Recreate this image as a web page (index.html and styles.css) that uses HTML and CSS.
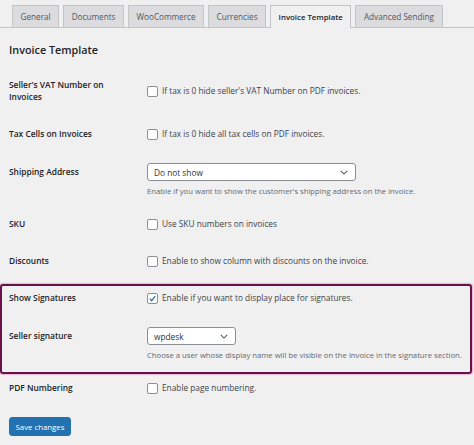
FILE: index.html
```html
<!DOCTYPE html>
<html lang="en">
<head>
<meta charset="utf-8">
<title>Invoice Template</title>
<link rel="stylesheet" href="styles.css">
</head>
<body>
<div class="page">
  <nav class="tabs">
    <a class="tab">General</a>
    <a class="tab">Documents</a>
    <a class="tab">WooCommerce</a>
    <a class="tab">Currencies</a>
    <a class="tab active">Invoice Template</a>
    <a class="tab">Advanced Sending</a>
  </nav>
  <div class="content">
    <h2 class="title">Invoice Template</h2>
    <div class="form">
      <div class="row center">
        <div class="label">Seller's VAT Number on<br>Invoices</div>
        <label class="check"><span class="box"></span>If tax is 0 hide seller's VAT Number on PDF invoices.</label>
      </div>
      <div class="row">
        <div class="label">Tax Cells on Invoices</div>
        <label class="check"><span class="box"></span>If tax is 0 hide all tax cells on PDF invoices.</label>
      </div>
      <div class="row select-row">
        <div class="label">Shipping Address</div>
        <div class="field">
          <div class="select wide">Do not show<svg class="chev" viewBox="0 0 10 6" width="8" height="5"><path d="M1 1l4 4 4-4" fill="none" stroke="#50575e" stroke-width="1.3"/></svg></div>
          <p class="desc">Enable if you want to show the customer's shipping address on the invoice.</p>
        </div>
      </div>
      <div class="row">
        <div class="label">SKU</div>
        <label class="check"><span class="box"></span>Use SKU numbers on invoices</label>
      </div>
      <div class="row">
        <div class="label">Discounts</div>
        <label class="check"><span class="box"></span>Enable to show column with discounts on the invoice.</label>
      </div>
      <div class="highlight">
        <div class="row">
          <div class="label">Show Signatures</div>
          <label class="check"><span class="box checked"><svg viewBox="0 0 10 10" width="9" height="9"><path d="M2 5.2l2 2.2 4-5" fill="none" stroke="#2271b1" stroke-width="1.4"/></svg></span>Enable if you want to display place for signatures.</label>
        </div>
        <div class="row select-row">
          <div class="label">Seller signature</div>
          <div class="field">
            <div class="select narrow">wpdesk<svg class="chev" viewBox="0 0 10 6" width="8" height="5"><path d="M1 1l4 4 4-4" fill="none" stroke="#50575e" stroke-width="1.3"/></svg></div>
            <p class="desc">Choose a user whose display name will be visible on the invoice in the signature section.</p>
          </div>
        </div>
      </div>
      <div class="row">
        <div class="label">PDF Numbering</div>
        <label class="check"><span class="box"></span>Enable page numbering.</label>
      </div>
    </div>
    <button class="save">Save changes</button>
  </div>
</div>
</body>
</html>
```
FILE: styles.css
```css
html, body {
  margin: 0;
  padding: 0;
  background: #f0f0f1;
}
body {
  font-family: "Open Sans", "Noto Sans", sans-serif;
  color: #1d2327;
  width: 474px;
  height: 445px;
  overflow: hidden;
}
.tabs {
  display: flex;
  gap: 4px;
  padding: 5px 0 0 12px;
  border-bottom: 1px solid #c3c4c7;
  height: 22px;
}
.tab {
  display: flex;
  align-items: center;
  height: 21px;
  padding: 0 7.5px;
  background: #dcdcde;
  border: 1px solid #c3c4c7;
  border-bottom: none;
  font-size: 8.2px;
  font-weight: 400;
  color: #50575e;
  white-space: nowrap;
}
.tab.active {
  background: #f0f0f1;
  color: #1d2327;
  height: 22px;
  font-weight: 600;
  font-size: 7.8px;
}
.content {
  padding-left: 9px;
}
.title {
  margin: 15px 0 10px;
  font-size: 10.8px;
  line-height: 14px;
  font-weight: 600;
  color: #1d2327;
}
.row {
  display: grid;
  grid-template-columns: 138px 1fr;
  align-items: start;
  padding: 12px 0 13px;
}
.row.center {
  align-items: center;
}
.row.select-row {
  padding: 10px 0 9px;
}
.select-row .label {
  margin-top: 3px;
}
.label {
  font-size: 8.4px;
  line-height: 12px;
  font-weight: 600;
  color: #1d2327;
}
.check {
  display: flex;
  align-items: center;
  gap: 4px;
  font-size: 8.3px;
  line-height: 12px;
  color: #3c434a;
}
.box {
  width: 9px;
  height: 9px;
  flex: none;
  background: #fff;
  border: 1px solid #8c8f94;
  border-radius: 2px;
  display: flex;
  align-items: center;
  justify-content: center;
}
.field {
  display: flex;
  flex-direction: column;
}
.select {
  box-sizing: border-box;
  height: 18px;
  display: flex;
  align-items: center;
  justify-content: space-between;
  padding: 0 7px 0 6px;
  background: #fff;
  border: 1px solid #8c8f94;
  border-radius: 3px;
  font-size: 8.3px;
  color: #2c3338;
}
.select.wide { width: 209px; }
.select.narrow { width: 89px; }
.desc {
  margin: 4px 0 0;
  font-size: 7.7px;
  line-height: 12px;
  color: #646970;
  white-space: nowrap;
}
.highlight {
  position: relative;
}
.highlight::after {
  content: "";
  position: absolute;
  top: 4px;
  bottom: -4px;
  left: -9px;
  right: 2px;
  border: 2px solid #6b1049;
  border-radius: 3px;
  box-shadow: 0 0 1px 1px rgba(220, 120, 180, 0.5);
  pointer-events: none;
}
.save {
  margin-top: 10px;
  width: 62px;
  height: 19px;
  padding: 0;
  background: #2271b1;
  border: 1px solid #2271b1;
  border-radius: 3px;
  color: #fff;
  font-family: "Open Sans", "Noto Sans", sans-serif;
  font-size: 7.8px;
}
```
